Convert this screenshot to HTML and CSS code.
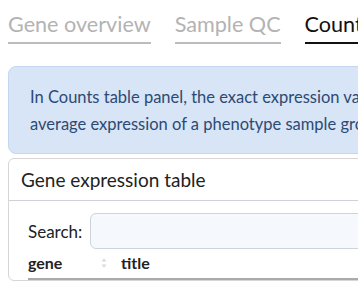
FILE: index.html
```html
<!DOCTYPE html>
<html>
<head>
<meta charset="utf-8">
<link rel="stylesheet" href="styles.css">
</head>
<body>
<div class="page">
  <nav class="tabs">
    <div class="tab">Gene overview</div>
    <div class="tab">Sample QC</div>
    <div class="tab active">Counts table</div>
  </nav>
  <div class="alert">In Counts table panel, the exact expression values of each gene are shown, together with the<br>average expression of a phenotype sample group.</div>
  <section class="card">
    <header class="card-header">Gene expression table</header>
    <div class="card-body">
      <div class="search">
        <label>Search:</label>
        <input class="search-input" type="text">
      </div>
      <div class="thead">
        <div class="th th-gene">gene<span class="sort"><svg width="6" height="14" viewBox="0 0 6 14"><path d="M3 2 L5.5 5.5 H0.5 Z" fill="#dcdcdc"/><path d="M3 12 L5.5 8.5 H0.5 Z" fill="#dcdcdc"/></svg></span></div>
        <div class="th th-title">title<span class="sort"><svg width="6" height="14" viewBox="0 0 6 14"><path d="M3 2 L5.5 5.5 H0.5 Z" fill="#dcdcdc"/><path d="M3 12 L5.5 8.5 H0.5 Z" fill="#dcdcdc"/></svg></span></div>
      </div>
    </div>
  </section>
</div>
</body>
</html>
```
FILE: styles.css
```css
* { box-sizing: border-box; }
html, body { margin: 0; padding: 0; background: #fff; overflow: hidden; }
body { font-family: Lato, "Open Sans", sans-serif; color: #222; }
.page { padding: 11px 0 0 8px; width: 900px; }
.tabs { display: flex; gap: 24px; }
.tab {
  font-size: 21.6px;
  line-height: 26px;
  padding-bottom: 5px;
  color: #b3b3b3;
  border-bottom: 2px solid #bcbcbc;
  white-space: nowrap;
}
.tab.active { color: #111; border-bottom-color: #111; }
.alert {
  margin-top: 22px;
  background: #d7e5f7;
  border: 1px solid #c5d7f0;
  border-radius: 8px;
  color: #2d4a73;
  font-size: 16.5px;
  line-height: 27px;
  padding: 17px 21px 15px 21px;
  white-space: nowrap;
}
.card {
  margin-top: 4px;
  border: 1px solid #d6d6d6;
  border-radius: 6px;
}
.card-header {
  font-size: 19px;
  line-height: 24px;
  padding: 9px 12px 8px 12px;
  border-bottom: 1px solid #cfd3d8;
  color: #222;
}
.card-body { padding: 12px 20px 0 19px; }
.search { display: flex; align-items: center; gap: 8px; font-size: 17px; }
.search-input {
  width: 400px;
  height: 36px;
  background: #f5f8fc;
  border: 1px solid #cfd4da;
  border-radius: 6px;
}
.thead { display: flex; border-bottom: 2px solid #aaa; margin-top: 1px; }
.th {
  font-weight: bold;
  font-size: 16px;
  line-height: 20px;
  padding: 3px 0 5px 0;
  display: flex;
  align-items: center;
}
.th-gene { width: 83px; justify-content: space-between; padding-right: 4px; }
.th-title { padding-left: 10px; width: 300px; justify-content: space-between; }
.sort { display: flex; align-items: center; }
```
